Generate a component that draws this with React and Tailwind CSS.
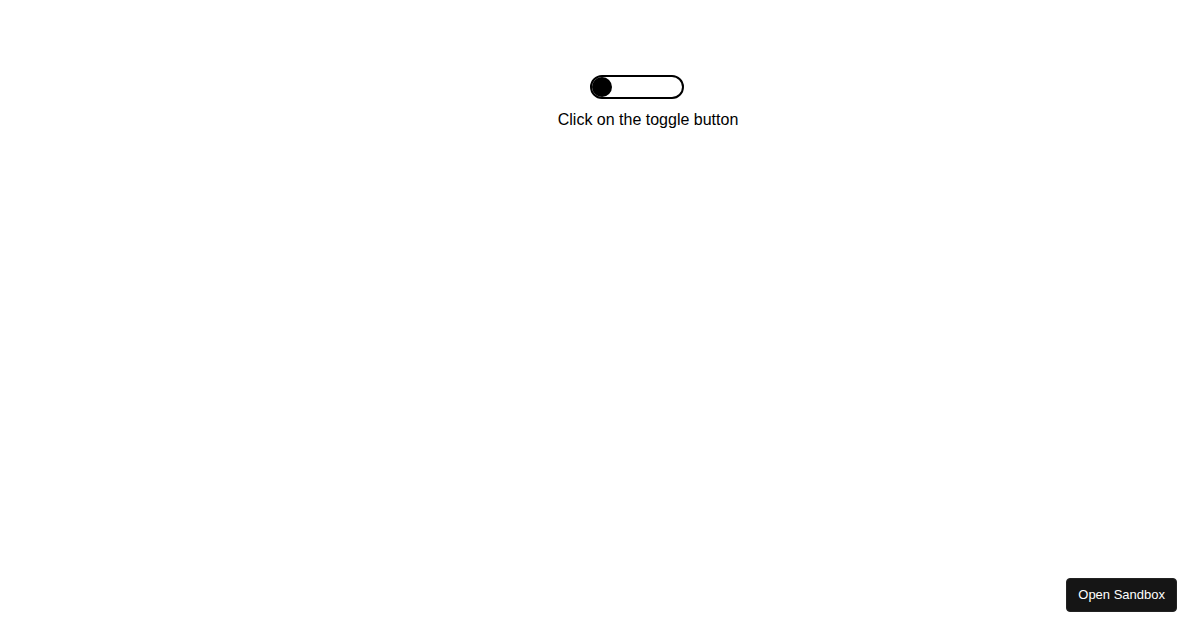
import React from 'react';

const Toggle = ({ checked, onChange }) => (
  <label htmlFor="toggle" className="ml-8 flex w-[94px] cursor-pointer rounded-full border-2 border-black">
    <input
      id="toggle"
      type="checkbox"
      role="switch"
      checked={checked}
      onChange={onChange}
      aria-label="Toggle"
      className={`h-5 w-5 cursor-pointer appearance-none rounded-full bg-black transition-all ${checked ? 'ml-[70px]' : 'ml-0'}`}
    />
  </label>
);

const App = () => {
  const [checked, setChecked] = React.useState(false);

  return (
    <div className="flex min-h-screen flex-col bg-white font-['Liberation_Sans',Arial,sans-serif] text-black">
      <main className="flex flex-1 flex-col items-center pt-[75px] pl-24">
        <div className="flex flex-col gap-[9px]">
          <Toggle checked={checked} onChange={() => setChecked(!checked)} />
          <p className="text-base">Click on the toggle button</p>
        </div>
      </main>
      <footer className="flex justify-end pr-[23px] pb-[18px]">
        <button type="button" className="h-[34px] cursor-pointer rounded-sm border border-[#222] bg-[#151515] px-[11px] text-[13px] text-white">
          Open Sandbox
        </button>
      </footer>
    </div>
  );
};

export default App;
